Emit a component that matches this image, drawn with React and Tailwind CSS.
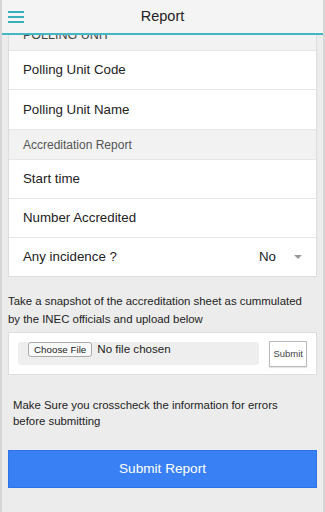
import React from "react";

const font = { fontFamily: '"Liberation Sans", Arial, sans-serif' };

function Row({ children, right, tall }) {
  return (
    <div
      className={
        "flex items-center justify-between px-[14px] border-t border-[#e6e6e6] text-[13.3px] text-[#222] " +
        (tall ? "h-[40px]" : "h-[39px]")
      }
    >
      <span>{children}</span>
      {right}
    </div>
  );
}

export default function App() {
  return (
    <div className="h-[512px] overflow-hidden bg-[#ececec] border-x-2 border-[#d6d6d6] flex flex-col" style={font}>
      <header className="h-[35px] shrink-0 flex items-center bg-[#f4f4f4] border-b-2 border-[#45b6c3] relative z-10">
        <div className="absolute left-[6px] top-[11px] flex flex-col gap-[3px]">
          <span className="block w-[16px] h-[2px] bg-[#3aaebb]" />
          <span className="block w-[16px] h-[2px] bg-[#3aaebb]" />
          <span className="block w-[16px] h-[2px] bg-[#3aaebb]" />
        </div>
        <h1 className="flex-1 text-center text-[14.5px] text-[#222]">Report</h1>
      </header>

      <div className="mx-[6px] bg-white border-x border-b border-[#dddddd]">
        <div className="h-[15px] overflow-hidden bg-[#f2f2f2] px-[14px]">
          <div className="-mt-[9px] text-[12.5px] leading-[18px] text-[#444]">POLLING UNIT</div>
        </div>
        <Row>Polling Unit Code</Row>
        <Row tall>Polling Unit Name</Row>
        <div className="flex items-center h-[30px] px-[14px] border-t border-[#e6e6e6] bg-[#f2f2f2] text-[12px] text-[#555]">
          Accreditation Report
        </div>
        <Row>Start time</Row>
        <Row>Number Accredited</Row>
        <Row
          right={
            <span className="flex items-center gap-[18px]">
              <span>No</span>
              <span className="w-0 h-0 border-x-[4px] border-x-transparent border-t-[4px] border-t-[#999]" />
            </span>
          }
        >
          Any incidence ?
        </Row>
      </div>

      <p className="mx-[6px] mt-[15px] w-[300px] text-[11.4px] leading-[18px] text-[#222]">
        Take a snapshot of the accreditation sheet as cummulated by the INEC officials and upload below
      </p>

      <div className="mx-[6px] mt-[4px] h-[43px] bg-white border border-[#dddddd] flex items-start px-[9px] pt-[9px] gap-[10px]">
        <div className="flex-1 h-[23px] bg-[#eeeeee] rounded-[3px] flex items-start pl-[10px] gap-[5px]">
          <span className="h-[15px] px-[5px] border border-[#aaa] rounded-[3px] bg-[#fafafa] text-[9.8px] leading-[13px] text-[#222]">
            Choose File
          </span>
          <span className="text-[11.6px] leading-[14px] text-[#222]">No file chosen</span>
        </div>
        <button className="h-[26px] -mt-[1px] px-[3px] border border-[#bbb] bg-white text-[9.5px] text-[#444] shadow-[0_1px_1px_rgba(0,0,0,0.1)]">
          Submit
        </button>
      </div>

      <p className="mx-[11px] mt-[22px] text-[11.4px] leading-[16px] text-[#222]">
        Make Sure you crosscheck the information for errors before submitting
      </p>

      <button className="mx-[6px] mt-[21px] h-[38px] bg-[#3a80f5] border border-[#2f72e8] text-white text-[13.6px]">
        Submit Report
      </button>
    </div>
  );
}
